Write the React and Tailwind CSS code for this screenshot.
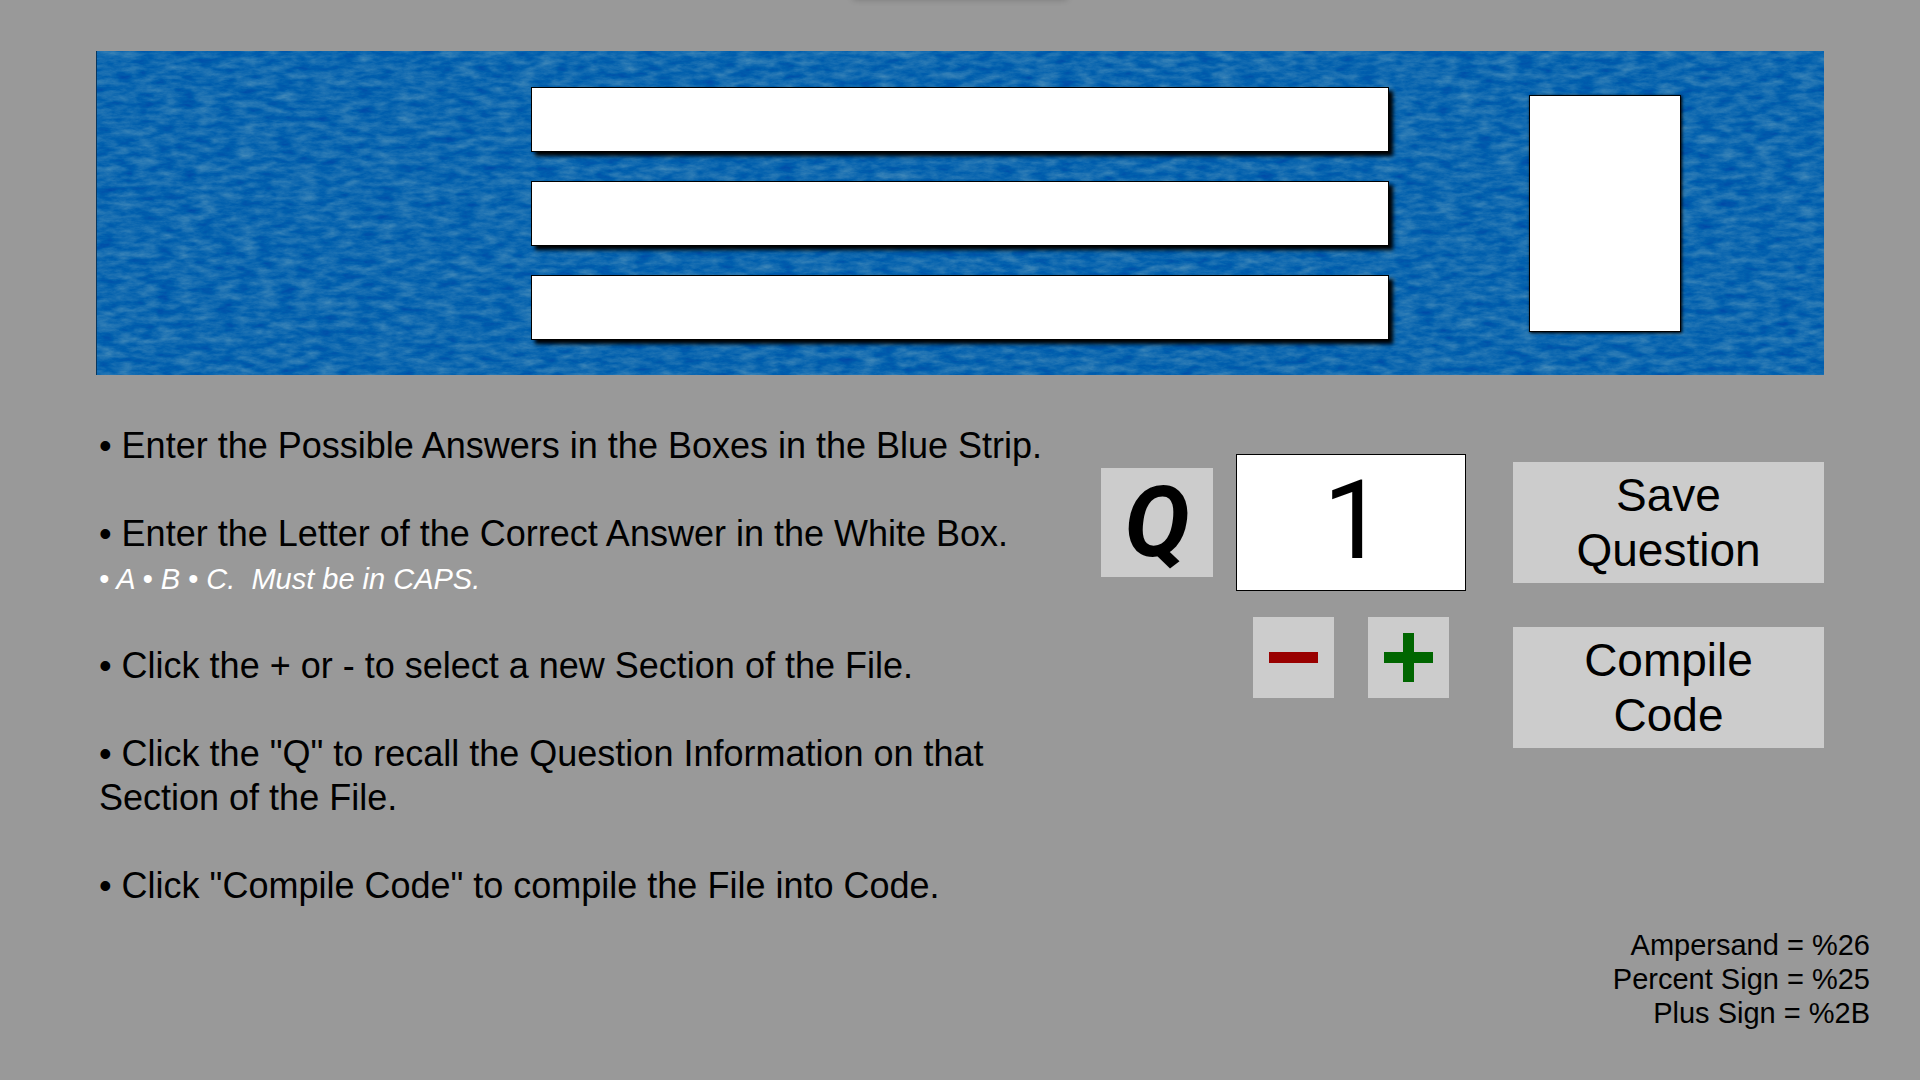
import React, { useState } from 'react';

const emptyQuestion = { answers: ['', '', ''], correct: '' };

const codes = [
  { name: 'Ampersand', code: '%26' },
  { name: 'Percent Sign', code: '%25' },
  { name: 'Plus Sign', code: '%2B' },
];

const BlueTexture = () => (
  <svg className="absolute inset-0 w-full h-full" aria-hidden="true">
    <filter id="water" x="0" y="0" width="100%" height="100%" colorInterpolationFilters="sRGB">
      <feTurbulence type="fractalNoise" baseFrequency="0.05 0.14" numOctaves="5" seed="8" />
      <feColorMatrix
        type="matrix"
        values="0.44 0 0 0 -0.16
                0.28 0 0 0 0.27
                0.08 0 0 0 0.65
                0 0 0 0 1"
      />
    </filter>
    <rect width="100%" height="100%" filter="url(#water)" />
  </svg>
);

const App = () => {
  const [section, setSection] = useState('1');
  const [saved, setSaved] = useState({});
  const [question, setQuestion] = useState(emptyQuestion);

  const setAnswer = (index, value) => {
    setQuestion(prev => ({
      ...prev,
      answers: prev.answers.map((answer, i) => (i === index ? value : answer)),
    }));
  };

  const step = (amount) => {
    setSection(prev => String(Math.max(1, (parseInt(prev, 10) || 1) + amount)));
  };

  const recallQuestion = () => setQuestion(saved[section] || emptyQuestion);

  const saveQuestion = () => setSaved(prev => ({ ...prev, [section]: question }));

  const compileCode = () => {
    const code = Object.entries(saved)
      .map(([key, q]) => `${key}=${[...q.answers, q.correct].join('|')}`)
      .join('&');
    console.log(code);
  };

  return (
    <div className="relative min-h-screen overflow-hidden bg-[#999999] text-black font-['Liberation_Sans',Arial,sans-serif]">
      {/* Shadow of the bar above the page */}
      <div className="absolute -top-2 left-1/2 w-[216px] h-2 -translate-x-1/2 rounded shadow-[0_0_6px_rgba(0,0,0,0.2)]" />

      <main className="px-[5%] pt-[51px]">
        {/* Blue strip */}
        <section className="relative border-l border-[#06365f] bg-[#0c68b0]">
          <BlueTexture />
          <div className="relative grid grid-cols-[434fr_858fr_140fr_152fr_143fr] items-center pt-9 pb-[35px]">
            <div className="col-start-2 flex flex-col gap-[29px]">
              {question.answers.map((answer, index) => (
                <input
                  key={index}
                  type="text"
                  aria-label={`Answer ${'ABC'[index]}`}
                  className="w-full min-w-0 h-[65px] px-3 text-4xl bg-white border border-black shadow-[4px_4px_4px_#000] outline-none"
                  value={answer}
                  onChange={(e) => setAnswer(index, e.target.value)}
                />
              ))}
            </div>
            <input
              type="text"
              aria-label="Correct answer"
              maxLength={1}
              className="col-start-4 w-full min-w-0 h-[237px] text-center text-[110px] bg-white border border-black shadow-[1px_1px_3px_#000] outline-none"
              value={question.correct}
              onChange={(e) => setQuestion({ ...question, correct: e.target.value })}
            />
          </div>
        </section>

        <div className="flex justify-between">
          {/* Instructions */}
          <section className="flex-1 max-w-[1000px] pt-[49px] pl-[3px] space-y-11 text-[36px] leading-[44px]">
            <p>• Enter the Possible Answers in the Boxes in the Blue Strip.</p>
            <div>
              <p>• Enter the Letter of the Correct Answer in the White Box.</p>
              <p className="pt-0.5 text-[29px] leading-[42px] italic text-white whitespace-pre-wrap">
                {'• A • B • C.  Must be in CAPS.'}
              </p>
            </div>
            <p>• Click the + or - to select a new Section of the File.</p>
            <p>• Click the "Q" to recall the Question Information on that Section of the File.</p>
            <p>• Click "Compile Code" to compile the File into Code.</p>
          </section>

          {/* Controls */}
          <section className="flex items-start pt-[79px]">
            <div className="flex items-center h-[137px] mr-[23px]">
              <button
                className="w-[112px] h-[109px] bg-[#cccccc] text-[98px] leading-[109px] font-bold italic font-['Liberation_Sans_Narrow',Roboto,sans-serif]"
                onClick={recallQuestion}
              >
                Q
              </button>
            </div>

            <div className="flex flex-col items-center gap-[26px] mr-[47px]">
              <input
                type="text"
                aria-label="Section"
                className="w-[230px] h-[137px] pl-1.5 pb-1 text-center text-[110px] font-['Roboto',sans-serif] bg-white border border-black outline-none"
                value={section}
                onChange={(e) => setSection(e.target.value)}
              />
              <div className="flex gap-[34px]">
                <button
                  aria-label="Previous section"
                  className="flex items-center justify-center w-[81px] h-[81px] bg-[#cccccc]"
                  onClick={() => step(-1)}
                >
                  <svg width="49" height="49" viewBox="0 0 49 49" fill="#990000">
                    <rect x="0" y="19" width="49" height="11" />
                  </svg>
                </button>
                <button
                  aria-label="Next section"
                  className="flex items-center justify-center w-[81px] h-[81px] bg-[#cccccc]"
                  onClick={() => step(1)}
                >
                  <svg width="49" height="49" viewBox="0 0 49 49" fill="#006600">
                    <rect x="0" y="19" width="49" height="11" />
                    <rect x="19" y="0" width="11" height="49" />
                  </svg>
                </button>
              </div>
            </div>

            <div className="flex flex-col gap-11 pt-2 text-[46px] leading-[55px]">
              <button className="w-[311px] h-[121px] px-12 bg-[#cccccc]" onClick={saveQuestion}>
                Save<br />Question
              </button>
              <button className="w-[311px] h-[121px] px-12 bg-[#cccccc]" onClick={compileCode}>
                Compile<br />Code
              </button>
            </div>
          </section>
        </div>
      </main>

      {/* Escape codes */}
      <footer className="px-[50px] pt-5 pb-8 text-right text-[29px] leading-[34px]">
        {codes.map((item) => (
          <p key={item.name}>{item.name} = {item.code}</p>
        ))}
      </footer>
    </div>
  );
};

export default App;
